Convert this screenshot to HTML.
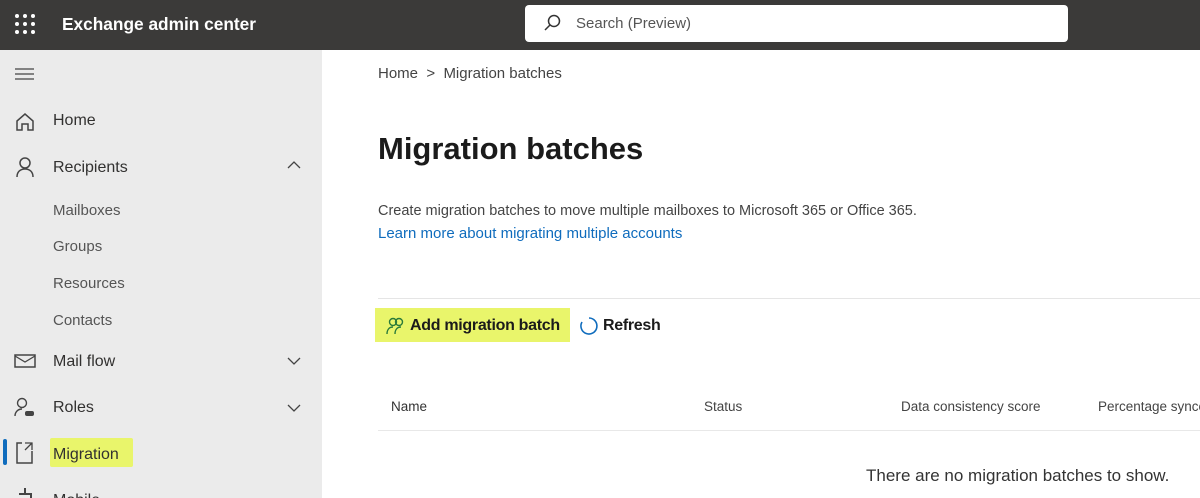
<!DOCTYPE html><html><head><style>
*{margin:0;padding:0;box-sizing:border-box}
html,body{width:1200px;height:498px;overflow:hidden}
body{font-family:"Liberation Sans",sans-serif;background:#fff}
#w{position:relative;width:1200px;height:498px;overflow:hidden}
.top{position:absolute;left:0;top:0;width:1200px;height:50px;background:#3b3a39}
.t{position:absolute;white-space:nowrap}
.side{position:absolute;left:0;top:50px;width:322px;height:448px;background:#ebebeb}
.nav{font-size:16px;color:#323130}
.sub{font-size:15px;color:#555}
svg{position:absolute}
</style></head><body><div id="w">
<div class="top"></div>
<svg style="left:14px;top:13px" width="22" height="22"><g fill="#fff"><circle cx="3" cy="3" r="2"/><circle cx="11" cy="3" r="2"/><circle cx="19" cy="3" r="2"/><circle cx="3" cy="11" r="2"/><circle cx="11" cy="11" r="2"/><circle cx="19" cy="11" r="2"/><circle cx="3" cy="19" r="2"/><circle cx="11" cy="19" r="2"/><circle cx="19" cy="19" r="2"/></g></svg>
<div class="t" style="left:62px;top:14px;color:#fff;font-size:17.3px;font-weight:bold">Exchange admin center</div>
<div style="position:absolute;left:525px;top:5px;width:543px;height:37px;background:#fff;border-radius:4px"></div>
<svg style="left:543px;top:14px" width="18" height="18"><circle cx="11" cy="7" r="5.5" fill="none" stroke="#333" stroke-width="1.5"/><path d="M7 11L2 16" stroke="#333" stroke-width="1.5"/></svg>
<div class="t" style="left:576px;top:15px;font-size:15px;color:#555">Search (Preview)</div>
<div class="side"></div>
<svg style="left:14px;top:67px" width="22" height="14"><path d="M1 2h19M1 7h19M1 12h19" stroke="#444" stroke-width="1.3"/></svg>
<svg style="left:15px;top:112px" width="20" height="20"><path d="M2 9L10 2l8 7v9h-5v-6H7v6H2z" fill="none" stroke="#444" stroke-width="1.5"/></svg>
<div class="t nav" style="left:53px;top:112px">Home</div>
<svg style="left:15px;top:157px" width="20" height="22"><circle cx="10" cy="6" r="5" fill="none" stroke="#444" stroke-width="1.5"/><path d="M2 20c0-5 3-8 8-8s8 3 8 8" fill="none" stroke="#444" stroke-width="1.5"/></svg>
<div class="t nav" style="left:53px;top:159px">Recipients</div>
<svg style="left:286px;top:160px" width="16" height="10"><path d="M2 8l6-6 6 6" fill="none" stroke="#444" stroke-width="1.3"/></svg>
<div class="t sub" style="left:53px;top:202px">Mailboxes</div>
<div class="t sub" style="left:53px;top:238px">Groups</div>
<div class="t sub" style="left:53px;top:275px">Resources</div>
<div class="t sub" style="left:53px;top:312px">Contacts</div>
<svg style="left:14px;top:354px" width="22" height="14"><rect x="1" y="1" width="20" height="12" fill="none" stroke="#444" stroke-width="1.5"/><path d="M1 2l10 6 10-6" fill="none" stroke="#444" stroke-width="1.3"/></svg>
<div class="t nav" style="left:53px;top:353px">Mail flow</div>
<svg style="left:286px;top:356px" width="16" height="10"><path d="M2 2l6 6 6-6" fill="none" stroke="#444" stroke-width="1.3"/></svg>
<svg style="left:14px;top:397px" width="22" height="22"><circle cx="8" cy="6" r="4.5" fill="none" stroke="#444" stroke-width="1.4"/><path d="M1 19c0-4 3-7 7-7" fill="none" stroke="#444" stroke-width="1.4"/><rect x="11" y="14" width="9" height="5" rx="2" fill="#444"/></svg>
<div class="t nav" style="left:53px;top:399px">Roles</div>
<svg style="left:286px;top:403px" width="16" height="10"><path d="M2 2l6 6 6-6" fill="none" stroke="#444" stroke-width="1.3"/></svg>
<div style="position:absolute;left:3px;top:439px;width:4px;height:26px;background:#0f6cbd;border-radius:2px"></div>
<svg style="left:16px;top:442px" width="18" height="22"><path d="M6 1H1v20h15V9" fill="none" stroke="#444" stroke-width="1.5"/><path d="M9 1h7v7M16 1l-7 7" fill="none" stroke="#444" stroke-width="1.3"/></svg>
<div style="position:absolute;left:50px;top:438px;width:83px;height:29px;background:#e9f56b;border-radius:2px"></div>
<div class="t nav" style="left:53px;top:446px">Migration</div>
<svg style="left:16px;top:488px" width="18" height="10"><path d="M9 0v6M3 6h12v4" fill="none" stroke="#444" stroke-width="2"/></svg>
<div class="t nav" style="left:53px;top:492px">Mobile</div>
<div class="t" style="left:378px;top:65px;font-size:15px;color:#444">Home &nbsp;&gt;&nbsp; Migration batches</div>
<div class="t" style="left:378px;top:131px;font-size:31px;font-weight:bold;color:#1b1b1b">Migration batches</div>
<div class="t" style="left:378px;top:203px;font-size:14.5px;color:#444">Create migration batches to move multiple mailboxes to Microsoft 365 or Office 365.</div>
<div class="t" style="left:378px;top:225px;font-size:15px;color:#0f6cbd">Learn more about migrating multiple accounts</div>
<div style="position:absolute;left:378px;top:298px;width:822px;height:1px;background:#e5e5e5"></div>
<div style="position:absolute;left:375px;top:308px;width:195px;height:34px;background:#e9f56b"></div>
<svg style="left:386px;top:317px" width="20" height="18"><circle cx="7" cy="5" r="3.5" fill="none" stroke="#2a7a3a" stroke-width="1.4"/><circle cx="13" cy="5" r="3.5" fill="none" stroke="#2a7a3a" stroke-width="1.4"/><path d="M1 17c0-4 2-7 6-7M9 17c0-4 2-7 6-7" fill="none" stroke="#2a7a3a" stroke-width="1.4"/></svg>
<div class="t" style="left:410px;top:317px;font-size:16px;color:#1b1b1b;font-weight:bold;letter-spacing:-.3px">Add migration batch</div>
<svg style="left:579px;top:316px" width="20" height="20"><path d="M10 2a8 8 0 1 1-7 4" fill="none" stroke="#0f6cbd" stroke-width="1.6"/></svg>
<div class="t" style="left:603px;top:317px;font-size:16px;color:#1b1b1b;font-weight:bold;letter-spacing:-.3px">Refresh</div>
<div class="t" style="left:391px;top:399px;font-size:13.5px;color:#333">Name</div>
<div class="t" style="left:704px;top:399px;font-size:13.5px;color:#444">Status</div>
<div class="t" style="left:901px;top:399px;font-size:13.5px;color:#444">Data consistency score</div>
<div class="t" style="left:1098px;top:399px;font-size:13.5px;color:#444">Percentage synced</div>
<div style="position:absolute;left:378px;top:430px;width:822px;height:1px;background:#e8e8e8"></div>
<div class="t" style="left:866px;top:466px;font-size:17px;color:#333">There are no migration batches to show.</div>
</div></body></html>
